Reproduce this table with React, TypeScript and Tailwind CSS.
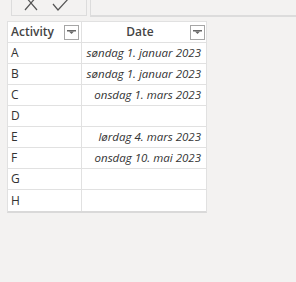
import React from "react";

type Row = { activity: string; date: string };

const rows: Row[] = [
  { activity: "A", date: "søndag 1. januar 2023" },
  { activity: "B", date: "søndag 1. januar 2023" },
  { activity: "C", date: "onsdag 1. mars 2023" },
  { activity: "D", date: "" },
  { activity: "E", date: "lørdag 4. mars 2023" },
  { activity: "F", date: "onsdag 10. mai 2023" },
  { activity: "G", date: "" },
  { activity: "H", date: "" },
];

function FilterButton() {
  return (
    <span className="flex h-[15px] w-[15px] shrink-0 items-center justify-center border border-[#a6a6a6] bg-white">
      <svg width="9" height="5" viewBox="0 0 9 5">
        <rect x="0" y="0" width="9" height="1.5" fill="#666" />
        <path d="M2 1.5 H7 L4.5 4 Z" fill="#666" />
      </svg>
    </span>
  );
}

export default function App() {
  return (
    <div
      className="h-[282px] w-[296px] overflow-hidden bg-[#f3f2f1] text-[12px] text-[#333]"
      style={{ fontFamily: '"Open Sans", "Noto Sans", sans-serif' }}
    >
      {/* formula bar */}
      <div className="flex h-[17px]">
        <div className="ml-[11px] flex h-[16px] w-[76px] items-start gap-[13px] border-x border-b border-[#dcdcdc] pl-[11px]">
          <svg width="16" height="12" viewBox="0 0 16 12" className="-mt-[1px]">
            <path d="M2 -3 L14 11 M14 -3 L2 11" stroke="#555" strokeWidth="1.2" fill="none" />
          </svg>
          <svg width="18" height="12" viewBox="0 0 18 12" className="-mt-[1px]">
            <path d="M1 5 L6 11 L17 -1" stroke="#555" strokeWidth="1.2" fill="none" />
          </svg>
        </div>
        <div className="ml-[3px] h-[17px] flex-1 border-b-2 border-l border-[#dcdcdc]" />
      </div>

      {/* table */}
      <div className="ml-[7px] mt-[4px] w-[200px] border-x border-t border-b-2 border-[#e1e1e1] border-b-[#d9d9d9] bg-white">
        <div className="flex h-[21px] border-b border-[#e1e1e1] font-semibold text-[#444]">
          <div className="flex w-[74px] items-center justify-between border-r border-[#e1e1e1] pl-[3px] pr-[2px]">
            <span>Activity</span>
            <FilterButton />
          </div>
          <div className="flex flex-1 items-center pr-[1px]">
            <span className="flex-1 text-center pl-[8px]">Date</span>
            <FilterButton />
          </div>
        </div>
        {rows.map((r, i) => (
          <div
            key={r.activity}
            className={
              "flex h-[21px] " + (i < rows.length - 1 ? "border-b border-[#e1e1e1]" : "")
            }
          >
            <div className="flex w-[74px] items-center border-r border-[#e1e1e1] pl-[3px]">
              {r.activity}
            </div>
            <div className="flex flex-1 items-center justify-end pr-[5px] text-[11.5px] italic">
              {r.date}
            </div>
          </div>
        ))}
      </div>
    </div>
  );
}
